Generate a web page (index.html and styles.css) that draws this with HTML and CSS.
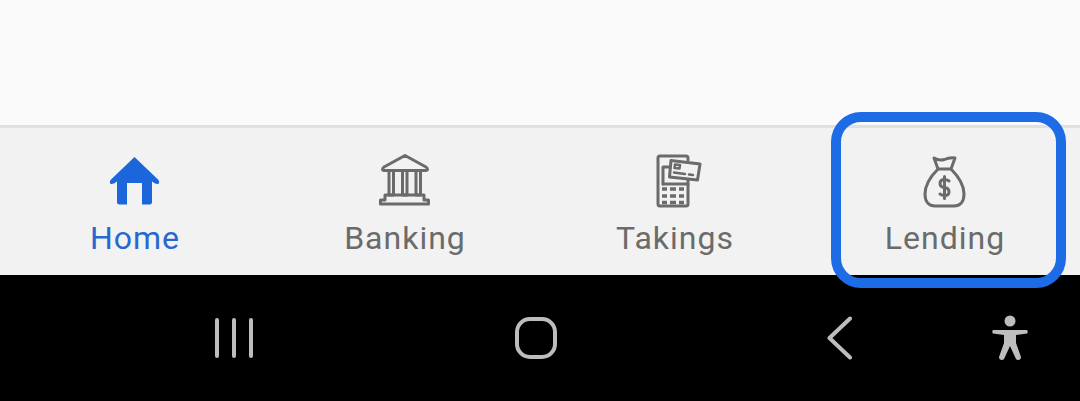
FILE: index.html
```html
<html>

<head>
    <title>Bottom navigation</title>
    <link rel="stylesheet" href="styles.css">
</head>

<body>
    <div class="content"></div>

    <nav class="tabs">
        <div class="tab active">
            <svg class="icon" viewBox="0 0 56 56">
                <path class="solid" d="M27.500 4 L51.500 27 Q53 30 51 31 Q49 31.500 45 28.500 L45 49 Q45 51.500 42.500 51.500 L35 51.500 L35 30 L20 30 L20 51.500 L12.500 51.500 Q10 51.500 10 49 L10 28.500 Q6 31.500 4 31 Q2 30 3.500 27 Z" />
            </svg>
            <span class="label">Home</span>
        </div>
        <div class="tab">
            <svg class="icon" viewBox="0 0 56 56">
                <path class="line" d="M28 2.500 L49 14 Q52 17 49 17.500 L7 17.500 Q4 17 7 14 Z" />
                <path class="line" d="M12 17.500 V42 H16.500 V17.500 M25.500 17.500 V42 H30 V17.500 M39 17.500 V42 H43.500 V17.500" />
                <path class="line" d="M8 42 H47 V47 H51.500 V51 H3.500 V47 H8 Z" />
            </svg>
            <span class="label">Banking</span>
        </div>
        <div class="tab">
            <svg class="icon" viewBox="0 0 56 56">
                <path class="line" d="M41 7 V5 Q41 3 39 3 H13 Q11 3 11 5 V51 Q11 53 13 53 H39 Q41 53 41 51 V27" />
                <path class="line" d="M16 31 V14 H22" />
                <path class="line" d="M16 31 H41" />
                <path class="card" d="M24 7.500 L53 11 L50.500 27 L22.500 24 Z" />
                <path class="line thin" d="M28 11.500 L33 12 L32.500 15.500 L27.500 15 Z M27 19.500 L38 21 M42 21.500 L46 22" />
                <path class="dots" d="M15 36 H20 M23 36 H29 M32 36 H37 M15 43 H20 M23 43 H29 M32 43 H37 M15 49.500 H20 M23 49.500 H29 M32 49.500 H37" />
            </svg>
            <span class="label">Takings</span>
        </div>
        <div class="tab">
            <svg class="icon" viewBox="0 0 56 56">
                <path class="line" d="M17 5 Q22 8 27.500 6.500 Q33 4 38 5 L34 16 H21 Z" />
                <path class="line" d="M21 16 C13 24 8 32 8 41 C8 49 12 53 18 53 H37 C43 53 47 49 47 41 C47 32 42 24 34 16" />
                <path class="line" d="M32 28 Q30 26.500 27.500 26.500 Q23 26.500 23 30.500 Q23 34 27.500 34.500 Q32 35 32 39 Q32 42.500 27.500 42.500 Q25 42.500 23 41 M27.500 23.500 V45.500" />
            </svg>
            <span class="label">Lending</span>
        </div>
        <div class="highlight"></div>
    </nav>

    <div class="sysbar">
        <svg class="sys recents" viewBox="0 0 40 44">
            <path d="M3 4 V40 M20 4 V40 M37 4 V40" />
        </svg>
        <svg class="sys home" viewBox="0 0 44 44">
            <rect x="3" y="3" width="38" height="38" rx="13" />
        </svg>
        <svg class="sys back" viewBox="0 0 26 44">
            <path d="M24 2.500 L3.500 22 L24 41.500" />
        </svg>
        <svg class="sys person" viewBox="0 0 40 46">
            <circle cx="20" cy="6" r="5.500" />
            <path d="M3 15 H37 Q38.500 17 37 18.500 L26 20 L26 28 L31 42 Q31 45 28 45 Q26 45 25.500 43 L20 31 L14.500 43 Q14 45 12 45 Q9 45 9 42 L14 28 L14 20 L3 18.500 Q1.500 17 3 15 Z" />
        </svg>
    </div>
</body>

</html>
```

FILE: styles.css
```css
:root {
    --blue: #1e6be6;
    --grey: #6b6b6b;
    --sys: #bdbdbd;
}

body {
    margin: 0;
    background-color: #fafafa;
    font-family: Roboto, "Liberation Sans", sans-serif;
    overflow: hidden;
}

.content {
    height: 125px;
}

.tabs {
    position: relative;
    display: flex;
    height: 147px;
    background-color: #f2f2f2;
    border-top: 3px solid #e0e0e0;
}

.tab {
    display: flex;
    flex: 1;
    flex-direction: column;
    align-items: center;
    padding-top: 25px;
    color: var(--grey);
}

.tab.active {
    color: #1c66dc;
}

.tab.active .label {
    color: #2668d0;
}

.icon {
    width: 56px;
    height: 56px;
}

.label {
    margin-top: 11px;
    font-size: 32px;
    line-height: 36px;
    letter-spacing: 1px;
}

.solid {
    fill: currentColor;
}

.line,
.card,
.dots {
    fill: none;
    stroke: currentColor;
    stroke-width: 3;
    stroke-linejoin: round;
    stroke-linecap: round;
}

.card {
    fill: #f2f2f2;
}

.thin {
    stroke-width: 2.500;
}

.dots {
    stroke-width: 3.500;
    stroke-linecap: butt;
}

.highlight {
    position: absolute;
    top: -16px;
    right: 14px;
    width: 215px;
    height: 156px;
    border: 10px solid var(--blue);
    border-radius: 30px;
}

.sysbar {
    display: grid;
    grid-template-columns: 302px 302px 303px 40px;
    justify-items: center;
    align-items: center;
    height: 126px;
    padding-left: 83px;
    background-color: #000000;
}

.sys {
    fill: none;
    stroke: var(--sys);
    stroke-width: 4;
    stroke-linecap: round;
    stroke-linejoin: round;
}

.recents {
    width: 40px;
    height: 44px;
}

.home {
    width: 44px;
    height: 44px;
}

.back {
    width: 26px;
    height: 44px;
}

.person {
    width: 40px;
    height: 46px;
    fill: var(--sys);
    stroke: none;
}
```
